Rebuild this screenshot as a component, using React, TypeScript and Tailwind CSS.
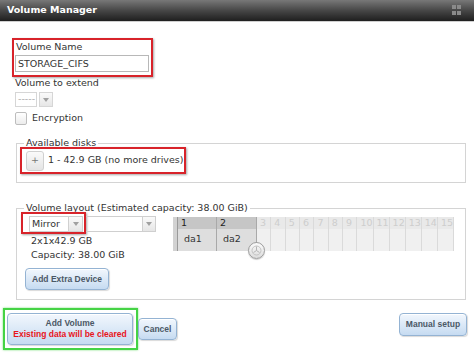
import React from "react";

const btn =
  "flex items-center justify-center rounded-[4px] border border-[#94b3d3] bg-gradient-to-b from-[#f2f7fd] to-[#c6dbf1] font-['Liberation_Sans',sans-serif] text-[8.5px] font-bold text-[#4b5866] shadow-[inset_0_1px_0_#fff,1px_1px_1px_rgba(0,0,0,0.15)]";

const redBox = "border-2 border-[#d8232a] shadow-[1px_1px_2px_rgba(0,0,0,0.35)]";

function Arrow({ className = "" }: { className?: string }) {
  return (
    <div className={`flex items-center justify-center border-l border-[#d0d0d0] bg-gradient-to-b from-[#fafafa] to-[#e6e6e6] ${className}`}>
      <svg width="6" height="4" viewBox="0 0 6 4">
        <path d="M0 0h6L3 4z" fill="#a0a0a0" />
      </svg>
    </div>
  );
}

function DiskGrid() {
  const cols = Array.from({ length: 15 }, (_, i) => i + 1);
  return (
    <div className="relative mt-[4px] flex h-[34px] w-[281px] border-l-4 border-[#d2d2d2]">
      {cols.map((n) => {
        const active = n <= 2;
        return (
          <div
            key={n}
            className={`flex flex-col border-r ${active ? "w-[40px] border-[#a9a9a9]" : "flex-1 border-[#dadada]"} ${n === 1 ? "border-l border-l-[#9a9a9a]" : ""}`}
          >
            <div className={`h-[12px] pl-[3px] leading-[12px] ${active ? "bg-[#c6c6c6] text-[#222]" : "bg-[#e9e9e9] text-[#cdcdcd]"}`}>
              {n}
            </div>
            <div className={`flex-1 pl-[6px] leading-[20px] ${active ? "bg-[#dedede] text-[#333]" : "bg-[#f0f0f0]"}`}>
              {active ? `da${n}` : ""}
            </div>
          </div>
        );
      })}
      <div className="absolute left-[71px] top-[25px] flex h-[17px] w-[17px] items-center justify-center rounded-full border border-[#9d9d9d] bg-gradient-to-b from-[#fbfbfb] to-[#dcdcdc] shadow-[0_1px_1px_rgba(0,0,0,0.2)]">
        <svg width="11" height="11" viewBox="0 0 11 11">
          <circle cx="5.5" cy="5.5" r="4.5" stroke="#c4c4c4" fill="none" />
          <path d="M5.5 1.5v4M5.5 5.5l3 2M5.5 5.5l-3 2" stroke="#b5b5b5" strokeWidth="1" fill="none" />
        </svg>
      </div>
    </div>
  );
}

export default function App() {
  return (
    <div className="h-[353px] w-[474px] overflow-hidden bg-white font-['DejaVu_Sans',sans-serif] text-[9.5px] text-[#333]">
      <div className="flex h-[22px] items-center justify-between border-b border-[#cfcfcf] bg-gradient-to-b from-[#787878] via-[#474747] to-[#1f1f1f] pl-[7px] pr-[12px]">
        <span className="font-bold text-white">Volume Manager</span>
        <svg width="10" height="11" viewBox="0 0 10 11">
          <rect x="0" y="0" width="4" height="4" fill="#8a8a8a" />
          <rect x="5" y="0" width="4" height="4" fill="#8a8a8a" />
          <rect x="0" y="6" width="4" height="4" fill="#8a8a8a" />
          <rect x="5" y="6" width="4" height="4" fill="#8a8a8a" />
        </svg>
      </div>

      <div className="pl-[16px] pr-[7px]">
        <div className={`-ml-[4px] mt-[16px] h-[39px] w-[141px] ${redBox}`}>
          <div className="pl-[2px] leading-[14px]">Volume Name</div>
          <div className="ml-[1px] mt-[1px] h-[17px] w-[134px] border border-[#b8b8b8] pl-[2px] leading-[15px]">
            STORAGE_CIFS
          </div>
        </div>

        <div className="-ml-[1px] leading-[12px]">Volume to extend</div>

        <div className="-ml-[1px] mt-[3px] flex h-[15px] gap-[2px]">
          <div className="w-[22px] border border-[#d6d6d6] pl-[2px] leading-[12px] text-[#aaa]">-----</div>
          <Arrow className="w-[14px] border border-[#d6d6d6]" />
        </div>

        <div className="-ml-[1px] mt-[5px] flex h-[13px] items-center gap-[5px]">
          <div className="h-[13px] w-[12px] rounded-[2px] border border-[#bdbdbd] bg-gradient-to-b from-white to-[#ececec]" />
          <span>Encryption</span>
        </div>

        <fieldset className="mt-[13px] w-[450px] border border-[#d4d4d4] pb-[8px]">
          <legend className="ml-[7px] px-[2px] leading-[10px]">Available disks</legend>
          <div className={`-mt-[1px] ml-[3px] flex h-[27px] w-[166px] items-center ${redBox}`}>
            <div className="ml-[4px] flex h-[20px] w-[18px] items-center justify-center rounded-[3px] border border-[#d0d0d0] bg-gradient-to-b from-[#fafafa] to-[#e4e4e4] text-[#777]">
              +
            </div>
            <span className="ml-[4px]">1 - 42.9 GB (no more drives)</span>
          </div>
        </fieldset>

        <fieldset className="mt-[20px] w-[450px] border border-[#d4d4d4] pb-[9px]">
          <legend className="ml-[7px] px-[2px] leading-[10px]">Volume layout (Estimated capacity: 38.00 GiB)</legend>
          <div className="flex">
            <div className="w-[156px]">
              <div className="flex items-start">
                <div className={`-mt-[1px] ml-[4px] h-[22px] w-[65px] ${redBox}`}>
                  <div className="ml-[6px] mt-[2px] flex h-[16px] w-[54px] border border-[#cfcfcf]">
                    <span className="flex-1 pl-[2px] leading-[14px]">Mirror</span>
                    <Arrow className="w-[14px]" />
                  </div>
                </div>
                <div className="mt-[3px] flex h-[16px] w-[70px] border border-l-0 border-[#cfcfcf]">
                  <span className="flex-1" />
                  <Arrow className="w-[13px]" />
                </div>
              </div>
              <div className="ml-[14px] leading-[14px]">2x1x42.9 GB</div>
              <div className="ml-[14px] leading-[14px]">Capacity: 38.00 GiB</div>
              <button className={`${btn} ml-[8px] mt-[6px] h-[22px] w-[84px]`}>Add Extra Device</button>
            </div>
            <DiskGrid />
          </div>
        </fieldset>

        <div className="mt-[8px] flex items-start">
          <div className="-ml-[13px] h-[42px] w-[135px] border-2 border-[#45d345] shadow-[0_0_2px_#7be07b]">
            <button className={`${btn} ml-[2px] mt-[3px] h-[32px] w-[126px] flex-col leading-[11px]`}>
              <span>Add Volume</span>
              <span className="text-[#e8141c]">Existing data will be cleared</span>
            </button>
          </div>
          <button className={`${btn} mt-[10px] h-[22px] w-[39px]`}>Cancel</button>
          <button className={`${btn} ml-auto mt-[5px] h-[23px] w-[68px]`}>Manual setup</button>
        </div>
      </div>
    </div>
  );
}
